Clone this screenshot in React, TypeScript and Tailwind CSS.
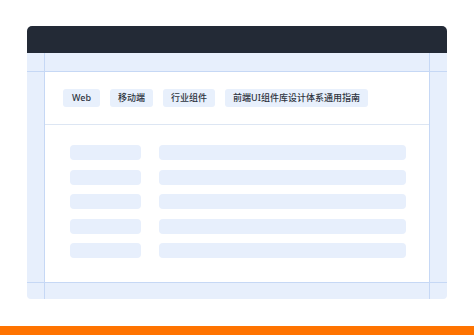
import React from "react";

const tags = ["Web", "移动端", "行业组件", "前端UI组件库设计体系通用指南"];
const rows = [0, 1, 2, 3, 4];

export default function App() {
  return (
    <div
      className="w-[474px] h-[335px] bg-white flex flex-col overflow-hidden"
      style={{ fontFamily: '"Noto Sans", "Noto Sans CJK SC", sans-serif' }}
    >
      <div className="h-[26px] shrink-0" />
      <div className="mx-[27px] w-[420px] h-[273px] flex flex-col shrink-0">
        <div className="h-[27px] bg-[#232a36] rounded-t-[5px]" />
        <div className="flex-1 grid grid-cols-[18px_384px_18px] grid-rows-[19px_210px_17px] bg-[#e7effc] rounded-b-[4px] overflow-hidden">
          <div className="border-r border-b border-[#c6d8f5]" />
          <div className="border-b border-[#c6d8f5]" />
          <div className="border-l border-b border-[#c6d8f5]" />

          <div className="border-r border-[#c6d8f5]" />
          <div className="bg-white flex flex-col">
            <div className="flex gap-[10px] pl-[18px] pt-[17px] h-[53px] border-b border-[#dde6f3]">
              {tags.map((t) => (
                <div
                  key={t}
                  className="h-[18px] px-[8px] flex items-center rounded-[3px] bg-[#e8f0fc] text-[9px] font-medium text-[#2e3440] whitespace-nowrap"
                >
                  {t === "Web" ? <span className="px-[1px]">{t}</span> : t}
                </div>
              ))}
            </div>
            <div className="flex flex-col gap-[9.6px] pt-[20px] pl-[25px] pr-[23px]">
              {rows.map((r) => (
                <div key={r} className="flex gap-[18px]">
                  <div className="w-[71px] h-[15px] rounded-[4px] bg-[#e7effc]" />
                  <div className="flex-1 h-[15px] rounded-[4px] bg-[#e7effc]" />
                </div>
              ))}
            </div>
          </div>
          <div className="border-l border-[#c6d8f5]" />

          <div className="border-r border-t border-[#c6d8f5]" />
          <div className="border-t border-[#c6d8f5]" />
          <div className="border-l border-t border-[#c6d8f5]" />
        </div>
      </div>
      <div className="flex-1" />
      <div className="h-[9px] bg-[#ff7300] shrink-0" />
    </div>
  );
}
